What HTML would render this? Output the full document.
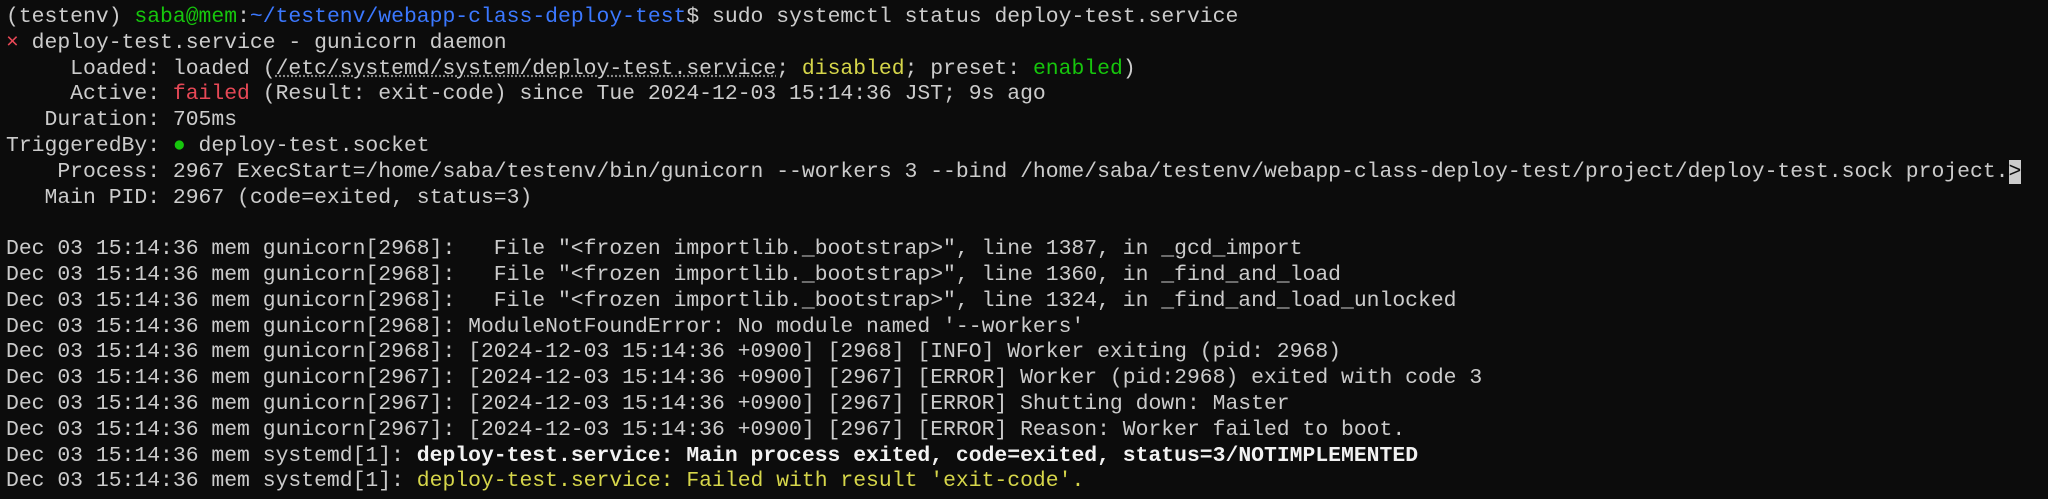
<!DOCTYPE html>
<html><head><meta charset="utf-8"><style>
html,body{margin:0;padding:0;background:#0c0c0c;width:2048px;height:499px;overflow:hidden;position:relative}
.l{position:absolute;left:6px;height:26px;line-height:26px;white-space:pre;font-family:"Liberation Mono","DejaVu Sans Mono",monospace;font-size:21.4px;color:#cccccc}
.g{color:#16c60c}.b{color:#3b78ff}.r{color:#e74856}.y{color:#d6d64a}.w{color:#f2f2f2;font-weight:bold}
.u{text-decoration:underline dotted #888}
.cur{background:#cccccc;color:#0c0c0c}
</style></head><body>
<div class="l" style="top:4px">(testenv) <span class="g">saba@mem</span>:<span class="b">~/testenv/webapp-class-deploy-test</span>$ sudo systemctl status deploy-test.service</div>
<div class="l" style="top:29.8px"><span class="r">×</span> deploy-test.service - gunicorn daemon</div>
<div class="l" style="top:55.6px">     Loaded: loaded (<span class="u">/etc/systemd/system/deploy-test.service</span>; <span class="y">disabled</span>; preset: <span class="g">enabled</span>)</div>
<div class="l" style="top:81.4px">     Active: <span class="r">failed</span> (Result: exit-code) since Tue 2024-12-03 15:14:36 JST; 9s ago</div>
<div class="l" style="top:107.2px">   Duration: 705ms</div>
<div class="l" style="top:133px">TriggeredBy: <span class="g">●</span> deploy-test.socket</div>
<div class="l" style="top:158.8px">    Process: 2967 ExecStart=/home/saba/testenv/bin/gunicorn --workers 3 --bind /home/saba/testenv/webapp-class-deploy-test/project/deploy-test.sock project.<span class="cur">&gt;</span></div>
<div class="l" style="top:184.6px">   Main PID: 2967 (code=exited, status=3)</div>
<div class="l" style="top:236.2px">Dec 03 15:14:36 mem gunicorn[2968]:   File "&lt;frozen importlib._bootstrap&gt;", line 1387, in _gcd_import</div>
<div class="l" style="top:262px">Dec 03 15:14:36 mem gunicorn[2968]:   File "&lt;frozen importlib._bootstrap&gt;", line 1360, in _find_and_load</div>
<div class="l" style="top:287.8px">Dec 03 15:14:36 mem gunicorn[2968]:   File "&lt;frozen importlib._bootstrap&gt;", line 1324, in _find_and_load_unlocked</div>
<div class="l" style="top:313.6px">Dec 03 15:14:36 mem gunicorn[2968]: ModuleNotFoundError: No module named '--workers'</div>
<div class="l" style="top:339.4px">Dec 03 15:14:36 mem gunicorn[2968]: [2024-12-03 15:14:36 +0900] [2968] [INFO] Worker exiting (pid: 2968)</div>
<div class="l" style="top:365.2px">Dec 03 15:14:36 mem gunicorn[2967]: [2024-12-03 15:14:36 +0900] [2967] [ERROR] Worker (pid:2968) exited with code 3</div>
<div class="l" style="top:391px">Dec 03 15:14:36 mem gunicorn[2967]: [2024-12-03 15:14:36 +0900] [2967] [ERROR] Shutting down: Master</div>
<div class="l" style="top:416.8px">Dec 03 15:14:36 mem gunicorn[2967]: [2024-12-03 15:14:36 +0900] [2967] [ERROR] Reason: Worker failed to boot.</div>
<div class="l" style="top:442.6px">Dec 03 15:14:36 mem systemd[1]: <span class="w">deploy-test.service: Main process exited, code=exited, status=3/NOTIMPLEMENTED</span></div>
<div class="l" style="top:468.4px">Dec 03 15:14:36 mem systemd[1]: <span class="y">deploy-test.service: Failed with result 'exit-code'.</span></div>
</body></html>
